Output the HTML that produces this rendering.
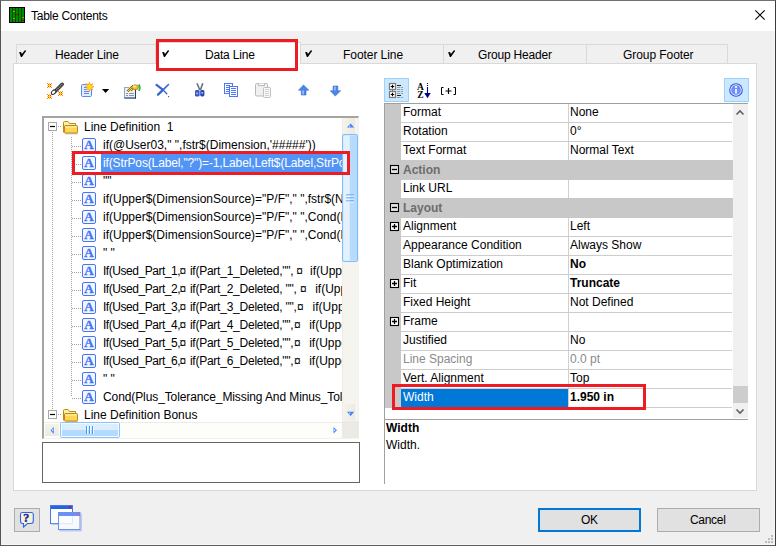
<!DOCTYPE html>
<html><head><meta charset="utf-8">
<style>
*{box-sizing:border-box}
html,body{margin:0;padding:0}
body{width:776px;height:546px;overflow:hidden;background:#f0f0f0;position:relative;font-family:"Liberation Sans",sans-serif;font-size:12px;color:#000}
.a{position:absolute}
.t{position:absolute;white-space:pre;line-height:14px;font-size:12px}
svg{position:absolute;overflow:visible}
</style></head><body>
<!-- window frame -->
<div class="a" style="left:0;top:0;width:776px;height:546px;border-style:solid;border-width:1px;border-color:#707070 #3c3c3c #5e5e5e #555"></div><div class="a" style="left:774px;top:31px;width:1px;height:514px;background:#f8f8f8"></div><div class="a" style="left:1px;top:544px;width:774px;height:1px;background:#f8f8f8"></div>
<div class="a" style="left:1px;top:1px;width:774px;height:30px;background:#fff"></div>
<!-- title icon -->
<svg style="left:9px;top:7px" width="16" height="16" viewBox="0 0 16 16">
<rect x="0" y="0" width="16" height="16" fill="#000"/>
<rect x="1" y="1" width="14" height="14" fill="#008a00"/>
<rect x="3" y="1" width="1" height="14" fill="#004a00"/>
<rect x="6" y="1" width="1" height="14" fill="#004a00"/>
<rect x="9" y="1" width="1" height="14" fill="#004a00"/>
<rect x="12" y="1" width="1" height="14" fill="#004a00"/>
<rect x="4" y="4" width="2" height="1" fill="#c89000"/>
<rect x="7" y="7" width="2" height="1" fill="#b00000"/>
<rect x="4" y="11" width="2" height="1" fill="#c89000"/>
<rect x="13" y="10" width="2" height="1" fill="#c89000"/>
<rect x="13" y="13" width="2" height="1" fill="#b00000"/>
</svg>
<div class="t" style="left:31px;top:9px;letter-spacing:-0.26px">Table Contents</div>
<svg style="left:755px;top:10px" width="10" height="10" viewBox="0 0 10 10"><path d="M0.3 0.3L9.7 9.7M9.7 0.3L0.3 9.7" stroke="#000" stroke-width="1.05"/></svg>

<!-- tabs -->
<div class="a" style="left:16px;top:44px;width:140px;height:20px;background:#f0f0f0;border:1px solid #d9d9d9;border-bottom:none"></div>
<div class="a" style="left:300px;top:44px;width:144px;height:20px;background:#f0f0f0;border:1px solid #d9d9d9;border-bottom:none"></div>
<div class="a" style="left:443px;top:44px;width:144px;height:20px;background:#f0f0f0;border:1px solid #d9d9d9;border-bottom:none"></div>
<div class="a" style="left:586px;top:44px;width:142px;height:20px;background:#f0f0f0;border:1px solid #d9d9d9;border-bottom:none"></div>
<!-- panel -->
<div class="a" style="left:13px;top:63px;width:744px;height:428px;background:#fff;border:1px solid #d9d9d9"></div>
<!-- selected tab -->
<div class="a" style="left:155px;top:42px;width:146px;height:22px;background:#fff;border:1px solid #d9d9d9;border-bottom:none"></div>
<div class="t" style="left:55px;top:48px;letter-spacing:-0.15px">Header Line</div>
<div class="t" style="left:205px;top:48px;letter-spacing:-0.19px">Data Line</div>
<div class="t" style="left:343px;top:48px;letter-spacing:-0.06px">Footer Line</div>
<div class="t" style="left:478px;top:48px;letter-spacing:-0.18px">Group Header</div>
<div class="t" style="left:623px;top:48px;letter-spacing:-0.07px">Group Footer</div>
<!-- checkmarks -->
<svg style="left:19px;top:50px" width="8" height="8" viewBox="0 0 8 8"><path d="M0.1 2.2L2.1 1.9L2.9 4.1L6.1 0L7.1 1.1L2.9 6.9L1.9 6.9Z" fill="#000"/></svg>
<svg style="left:162px;top:50px" width="8" height="8" viewBox="0 0 8 8"><path d="M0.1 2.2L2.1 1.9L2.9 4.1L6.1 0L7.1 1.1L2.9 6.9L1.9 6.9Z" fill="#000"/></svg>
<svg style="left:305px;top:50px" width="8" height="8" viewBox="0 0 8 8"><path d="M0.1 2.2L2.1 1.9L2.9 4.1L6.1 0L7.1 1.1L2.9 6.9L1.9 6.9Z" fill="#000"/></svg>
<svg style="left:448px;top:50px" width="8" height="8" viewBox="0 0 8 8"><path d="M0.1 2.2L2.1 1.9L2.9 4.1L6.1 0L7.1 1.1L2.9 6.9L1.9 6.9Z" fill="#000"/></svg>
<!-- red box around Data Line tab -->
<div class="a" style="left:156px;top:39px;width:142px;height:32px;border:3px solid #ed1c24"></div>

<svg style="left:0;top:0" width="776" height="546">
<g shape-rendering="crispEdges"><rect x="47" y="85" width="1" height="1" fill="#ffd800"/><rect x="48" y="85" width="1" height="1" fill="#ffd800"/><rect x="49" y="85" width="1" height="1" fill="#ffd800"/><rect x="50" y="85" width="1" height="1" fill="#ffd800"/><rect x="51" y="85" width="1" height="1" fill="#ffd800"/><rect x="49" y="83" width="1" height="1" fill="#ffd800"/><rect x="49" y="84" width="1" height="1" fill="#ffd800"/><rect x="49" y="86" width="1" height="1" fill="#ffd800"/><rect x="49" y="87" width="1" height="1" fill="#ffd800"/><rect x="47" y="83" width="1" height="1" fill="#ff6a80"/><rect x="51" y="83" width="1" height="1" fill="#ff6a80"/><rect x="47" y="87" width="1" height="1" fill="#ff6a80"/><rect x="51" y="87" width="1" height="1" fill="#ff6a80"/><rect x="48" y="84" width="1" height="1" fill="#ff4020"/><rect x="50" y="84" width="1" height="1" fill="#ff4020"/><rect x="48" y="86" width="1" height="1" fill="#ff4020"/><rect x="50" y="86" width="1" height="1" fill="#ff4020"/><rect x="47" y="96" width="1" height="1" fill="#ffd800"/><rect x="48" y="96" width="1" height="1" fill="#ffd800"/><rect x="49" y="96" width="1" height="1" fill="#ffd800"/><rect x="50" y="96" width="1" height="1" fill="#ffd800"/><rect x="51" y="96" width="1" height="1" fill="#ffd800"/><rect x="49" y="94" width="1" height="1" fill="#ffd800"/><rect x="49" y="95" width="1" height="1" fill="#ffd800"/><rect x="49" y="97" width="1" height="1" fill="#ffd800"/><rect x="49" y="98" width="1" height="1" fill="#ffd800"/><rect x="47" y="94" width="1" height="1" fill="#ff6a80"/><rect x="51" y="94" width="1" height="1" fill="#ff6a80"/><rect x="47" y="98" width="1" height="1" fill="#ff6a80"/><rect x="51" y="98" width="1" height="1" fill="#ff6a80"/><rect x="48" y="95" width="1" height="1" fill="#ff4020"/><rect x="50" y="95" width="1" height="1" fill="#ff4020"/><rect x="48" y="97" width="1" height="1" fill="#ff4020"/><rect x="50" y="97" width="1" height="1" fill="#ff4020"/><rect x="58" y="93" width="1" height="1" fill="#ffd800"/><rect x="59" y="93" width="1" height="1" fill="#ffd800"/><rect x="60" y="93" width="1" height="1" fill="#ffd800"/><rect x="61" y="93" width="1" height="1" fill="#ffd800"/><rect x="62" y="93" width="1" height="1" fill="#ffd800"/><rect x="60" y="91" width="1" height="1" fill="#ffd800"/><rect x="60" y="92" width="1" height="1" fill="#ffd800"/><rect x="60" y="94" width="1" height="1" fill="#ffd800"/><rect x="60" y="95" width="1" height="1" fill="#ffd800"/><rect x="58" y="91" width="1" height="1" fill="#ff6a80"/><rect x="62" y="91" width="1" height="1" fill="#ff6a80"/><rect x="58" y="95" width="1" height="1" fill="#ff6a80"/><rect x="62" y="95" width="1" height="1" fill="#ff6a80"/><rect x="59" y="92" width="1" height="1" fill="#ff4020"/><rect x="61" y="92" width="1" height="1" fill="#ff4020"/><rect x="59" y="94" width="1" height="1" fill="#ff4020"/><rect x="61" y="94" width="1" height="1" fill="#ff4020"/></g><path d="M62.2 84.3L55 91.5" stroke="#3a3a3a" stroke-width="3.6" stroke-linecap="round"/><path d="M62.2 84.3L55.5 91" stroke="#9a9a9a" stroke-width="1.6" stroke-dasharray="0.9 0.9"/><ellipse cx="53.6" cy="92.2" rx="2.6" ry="1.7" transform="rotate(-45 53.6 92.2)" fill="#fff" stroke="#333" stroke-width="1"/>
<rect x="81.5" y="84.5" width="10" height="12" rx="1.2" fill="#e4ecfc" stroke="#5b8bf2" stroke-width="1"/><path d="M84 87.5H86.5M84 89.5H86.5M84 91.5H89M84 93.5H89" stroke="#5b8bf2" stroke-width="1"/><path d="M89.50 82.20L90.30 84.86L92.75 83.55L91.44 86.00L94.10 86.80L91.44 87.60L92.75 90.05L90.30 88.74L89.50 91.40L88.70 88.74L86.25 90.05L87.56 87.60L84.90 86.80L87.56 86.00L86.25 83.55L88.70 84.86Z" fill="#ffff10" stroke="#ff7a20" stroke-width=".6"/><circle cx="89.5" cy="86.8" r="1.6" fill="#ffe000"/>
<path d="M102 89H109.2L105.6 93Z" fill="#000"/>
<rect x="124.5" y="87.5" width="11" height="10.5" fill="#eaf1fb" stroke="#90a8c8" stroke-width="1"/><path d="M124.5 98H136M135.5 88V98.5" stroke="#2a3a60" stroke-width="1"/><path d="M126 93.5H128M129 93.5H134M126 95.5H128M129 95.5H134" stroke="#8a94b0" stroke-width="1"/><g shape-rendering="crispEdges"><rect x="126" y="90" width="1" height="1" fill="#f4dc60"/><rect x="127" y="89" width="1" height="1" fill="#f4dc60"/><rect x="127" y="90" width="1" height="1" fill="#8a6a28"/><rect x="128" y="88" width="1" height="1" fill="#f4dc60"/><rect x="128" y="89" width="1" height="1" fill="#8a6a28"/><rect x="128" y="90" width="1" height="1" fill="#f4dc60"/><rect x="129" y="87" width="1" height="1" fill="#f4dc60"/><rect x="129" y="88" width="1" height="1" fill="#8a6a28"/><rect x="129" y="89" width="1" height="1" fill="#f4dc60"/><rect x="129" y="90" width="1" height="1" fill="#8a6a28"/><rect x="130" y="86" width="1" height="1" fill="#f4dc60"/><rect x="130" y="87" width="1" height="1" fill="#8a6a28"/><rect x="130" y="88" width="1" height="1" fill="#f4dc60"/><rect x="130" y="89" width="1" height="1" fill="#8a6a28"/><rect x="130" y="90" width="1" height="1" fill="#f4dc60"/><rect x="131" y="86" width="1" height="1" fill="#8a6a28"/><rect x="131" y="87" width="1" height="1" fill="#f4dc60"/><rect x="131" y="88" width="1" height="1" fill="#8a6a28"/><rect x="131" y="89" width="1" height="1" fill="#f4dc60"/><rect x="131" y="90" width="1" height="1" fill="#8a6a28"/><rect x="132" y="85" width="1" height="1" fill="#8a6a28"/><rect x="132" y="86" width="1" height="1" fill="#f4dc60"/><rect x="132" y="87" width="1" height="1" fill="#8a6a28"/><rect x="132" y="88" width="1" height="1" fill="#f4dc60"/><rect x="132" y="89" width="1" height="1" fill="#8a6a28"/><rect x="133" y="86" width="1" height="1" fill="#8a6a28"/><rect x="133" y="87" width="1" height="1" fill="#f4dc60"/><rect x="133" y="88" width="1" height="1" fill="#8a6a28"/><rect x="127" y="91" width="1" height="1" fill="#f4dc60"/><rect x="128" y="91" width="1" height="1" fill="#8a6a28"/><rect x="131" y="91" width="1" height="1" fill="#f4dc60"/><rect x="132" y="90" width="1" height="1" fill="#f4dc60"/></g><ellipse cx="135.2" cy="87.3" rx="3.3" ry="2.5" fill="#f2b828" stroke="#9a7010" stroke-width=".6"/><ellipse cx="134.6" cy="86.4" rx="2" ry="1" fill="#ffe890"/><path d="M138.8 84.5Q140.6 87.5 139 91" stroke="#40b040" stroke-width="1.8" fill="none"/>
<path d="M156.5 84.8L163 89.8" stroke="#3a64d0" stroke-width="2.2" stroke-linecap="round"/><path d="M163 89.8L167.2 94.2" stroke="#3a64d0" stroke-width="1.3"/><rect x="168" y="96" width="1.2" height="1.2" fill="#3a64d0"/><path d="M168.5 84.5L163 89.8" stroke="#3a64d0" stroke-width="1.6" stroke-linecap="round"/><path d="M163 89.8L158 94.6" stroke="#3a64d0" stroke-width="2.3" stroke-linecap="round"/>
<path d="M197 83.2L199.8 90M202.8 83.2L200.4 90" stroke="#6a7078" stroke-width="1.6"/><rect x="195" y="90" width="4.6" height="6.6" rx="1.4" fill="#3a5ac8"/><rect x="200.2" y="90" width="4.2" height="6.4" rx="1.4" fill="#2a48b0"/><rect x="196.3" y="92.6" width="1.6" height="1.6" fill="#a8c0ff"/><rect x="201.4" y="92" width="1.6" height="1.6" fill="#a8c0ff"/>
<g shape-rendering="crispEdges"><rect x="224.5" y="83.5" width="8" height="10" rx="1" fill="#fff" stroke="#4a78f8" stroke-width="1"/><path d="M226 85.5H230M226 87.5H230M226 89.5H230M226 91.5H230" stroke="#4a78f8" stroke-width="1"/><rect x="229.5" y="86.5" width="8" height="10" rx="1" fill="#fff" stroke="#4a78f8" stroke-width="1"/><path d="M231 88.5H236M231 90.5H236M231 92.5H236M231 94.5H236" stroke="#4a78f8" stroke-width="1"/></g>
<rect x="255.5" y="83.5" width="12" height="12.5" rx="1.2" fill="#f0f0f0" stroke="#b8b8b8" stroke-width="1"/><path d="M258.5 83.5V85.5H264.5V83.5" stroke="#b8b8b8" fill="#fff" stroke-width="1"/><rect x="263.5" y="87.5" width="7" height="10" rx=".8" fill="#f8f8f8" stroke="#c0c0c0" stroke-width="1"/><path d="M265 89.5H269M265 91.5H269M265 93.5H269M265 95.5H269" stroke="#d0d0d0" stroke-width="1"/>
<path d="M303.5 85L298.5 90.2H301.3V95H306V90.2H308.8Z" fill="#4a86e8" stroke="#3468c8" stroke-width=".6"/>
<rect x="302.4" y="90.5" width="1.4" height="4" fill="#a8c8ff"/>
<path d="M335.3 96L330.3 90.8H333.1V86H337.8V90.8H340.6Z" fill="#4a86e8" stroke="#3468c8" stroke-width=".6"/>
<rect x="334.2" y="86.5" width="1.4" height="4" fill="#a8c8ff"/>
</svg>

<div class="a" style="left:42px;top:116px;width:317px;height:323px;background:#fff;border-top:2px solid #a5a5a0;border-left:2px solid #a5a5a0;border-right:1px solid #f2f2ee;border-bottom:1px solid #f2f2ee"></div>
<div class="a" style="left:44px;top:118px;width:298px;height:304px;overflow:hidden">
<svg style="left:0;top:0" width="298" height="320">
<path d="M8.5 14V294" stroke="#a0a0a0" stroke-width="1" stroke-dasharray="1 1"/>
<path d="M27.5 19V279" stroke="#a0a0a0" stroke-width="1" stroke-dasharray="1 1"/>
<rect x="4.5" y="4.5" width="8" height="8" fill="#fff" stroke="#a8a8a8"/>
<path d="M6 8.5H11" stroke="#000" stroke-width="1.2"/>
<path d="M14 8.5H18" stroke="#a0a0a0" stroke-dasharray="1 1"/>
<g transform="translate(18,2)"><path d="M1.5 12.5V2.5Q1.5 1.5 2.5 1.5H6L7.5 3.5H13.5V5.5" fill="#fff0a8" stroke="#c08a10" stroke-width="1"/><rect x="2.5" y="5.5" width="13" height="7.5" rx=".8" fill="#ffd457" stroke="#c08a10" stroke-width="1"/><path d="M3.5 7H14.5" stroke="#fff6c0" stroke-width="1"/><path d="M3 13.8H16" stroke="#8a6a30" stroke-width=".8" opacity=".5"/></g>
<path d="M28 28.5H38" stroke="#a0a0a0" stroke-dasharray="1 1"/>
<g transform="translate(38,20)"><rect x=".5" y=".5" width="13" height="13" rx="1.5" fill="#f2f6ff" stroke="#4574f5" stroke-width="1"/><text x="7" y="11.4" text-anchor="middle" font-family="Liberation Serif" font-weight="bold" font-size="13" fill="#4574f5" stroke="#4574f5" stroke-width=".35">A</text></g>
<path d="M28 46.5H38" stroke="#a0a0a0" stroke-dasharray="1 1"/>
<g transform="translate(38,38)"><rect x=".5" y=".5" width="13" height="13" rx="1.5" fill="#f2f6ff" stroke="#4574f5" stroke-width="1"/><text x="7" y="11.4" text-anchor="middle" font-family="Liberation Serif" font-weight="bold" font-size="13" fill="#4574f5" stroke="#4574f5" stroke-width=".35">A</text></g>
<path d="M28 64.5H38" stroke="#a0a0a0" stroke-dasharray="1 1"/>
<g transform="translate(38,56)"><rect x=".5" y=".5" width="13" height="13" rx="1.5" fill="#f2f6ff" stroke="#4574f5" stroke-width="1"/><text x="7" y="11.4" text-anchor="middle" font-family="Liberation Serif" font-weight="bold" font-size="13" fill="#4574f5" stroke="#4574f5" stroke-width=".35">A</text></g>
<path d="M28 82.5H38" stroke="#a0a0a0" stroke-dasharray="1 1"/>
<g transform="translate(38,74)"><rect x=".5" y=".5" width="13" height="13" rx="1.5" fill="#f2f6ff" stroke="#4574f5" stroke-width="1"/><text x="7" y="11.4" text-anchor="middle" font-family="Liberation Serif" font-weight="bold" font-size="13" fill="#4574f5" stroke="#4574f5" stroke-width=".35">A</text></g>
<path d="M28 100.5H38" stroke="#a0a0a0" stroke-dasharray="1 1"/>
<g transform="translate(38,92)"><rect x=".5" y=".5" width="13" height="13" rx="1.5" fill="#f2f6ff" stroke="#4574f5" stroke-width="1"/><text x="7" y="11.4" text-anchor="middle" font-family="Liberation Serif" font-weight="bold" font-size="13" fill="#4574f5" stroke="#4574f5" stroke-width=".35">A</text></g>
<path d="M28 118.5H38" stroke="#a0a0a0" stroke-dasharray="1 1"/>
<g transform="translate(38,110)"><rect x=".5" y=".5" width="13" height="13" rx="1.5" fill="#f2f6ff" stroke="#4574f5" stroke-width="1"/><text x="7" y="11.4" text-anchor="middle" font-family="Liberation Serif" font-weight="bold" font-size="13" fill="#4574f5" stroke="#4574f5" stroke-width=".35">A</text></g>
<path d="M28 136.5H38" stroke="#a0a0a0" stroke-dasharray="1 1"/>
<g transform="translate(38,128)"><rect x=".5" y=".5" width="13" height="13" rx="1.5" fill="#f2f6ff" stroke="#4574f5" stroke-width="1"/><text x="7" y="11.4" text-anchor="middle" font-family="Liberation Serif" font-weight="bold" font-size="13" fill="#4574f5" stroke="#4574f5" stroke-width=".35">A</text></g>
<path d="M28 154.5H38" stroke="#a0a0a0" stroke-dasharray="1 1"/>
<g transform="translate(38,146)"><rect x=".5" y=".5" width="13" height="13" rx="1.5" fill="#f2f6ff" stroke="#4574f5" stroke-width="1"/><text x="7" y="11.4" text-anchor="middle" font-family="Liberation Serif" font-weight="bold" font-size="13" fill="#4574f5" stroke="#4574f5" stroke-width=".35">A</text></g>
<path d="M28 172.5H38" stroke="#a0a0a0" stroke-dasharray="1 1"/>
<g transform="translate(38,164)"><rect x=".5" y=".5" width="13" height="13" rx="1.5" fill="#f2f6ff" stroke="#4574f5" stroke-width="1"/><text x="7" y="11.4" text-anchor="middle" font-family="Liberation Serif" font-weight="bold" font-size="13" fill="#4574f5" stroke="#4574f5" stroke-width=".35">A</text></g>
<path d="M28 190.5H38" stroke="#a0a0a0" stroke-dasharray="1 1"/>
<g transform="translate(38,182)"><rect x=".5" y=".5" width="13" height="13" rx="1.5" fill="#f2f6ff" stroke="#4574f5" stroke-width="1"/><text x="7" y="11.4" text-anchor="middle" font-family="Liberation Serif" font-weight="bold" font-size="13" fill="#4574f5" stroke="#4574f5" stroke-width=".35">A</text></g>
<path d="M28 208.5H38" stroke="#a0a0a0" stroke-dasharray="1 1"/>
<g transform="translate(38,200)"><rect x=".5" y=".5" width="13" height="13" rx="1.5" fill="#f2f6ff" stroke="#4574f5" stroke-width="1"/><text x="7" y="11.4" text-anchor="middle" font-family="Liberation Serif" font-weight="bold" font-size="13" fill="#4574f5" stroke="#4574f5" stroke-width=".35">A</text></g>
<path d="M28 226.5H38" stroke="#a0a0a0" stroke-dasharray="1 1"/>
<g transform="translate(38,218)"><rect x=".5" y=".5" width="13" height="13" rx="1.5" fill="#f2f6ff" stroke="#4574f5" stroke-width="1"/><text x="7" y="11.4" text-anchor="middle" font-family="Liberation Serif" font-weight="bold" font-size="13" fill="#4574f5" stroke="#4574f5" stroke-width=".35">A</text></g>
<path d="M28 244.5H38" stroke="#a0a0a0" stroke-dasharray="1 1"/>
<g transform="translate(38,236)"><rect x=".5" y=".5" width="13" height="13" rx="1.5" fill="#f2f6ff" stroke="#4574f5" stroke-width="1"/><text x="7" y="11.4" text-anchor="middle" font-family="Liberation Serif" font-weight="bold" font-size="13" fill="#4574f5" stroke="#4574f5" stroke-width=".35">A</text></g>
<path d="M28 262.5H38" stroke="#a0a0a0" stroke-dasharray="1 1"/>
<g transform="translate(38,254)"><rect x=".5" y=".5" width="13" height="13" rx="1.5" fill="#f2f6ff" stroke="#4574f5" stroke-width="1"/><text x="7" y="11.4" text-anchor="middle" font-family="Liberation Serif" font-weight="bold" font-size="13" fill="#4574f5" stroke="#4574f5" stroke-width=".35">A</text></g>
<path d="M28 280.5H38" stroke="#a0a0a0" stroke-dasharray="1 1"/>
<g transform="translate(38,272)"><rect x=".5" y=".5" width="13" height="13" rx="1.5" fill="#f2f6ff" stroke="#4574f5" stroke-width="1"/><text x="7" y="11.4" text-anchor="middle" font-family="Liberation Serif" font-weight="bold" font-size="13" fill="#4574f5" stroke="#4574f5" stroke-width=".35">A</text></g>
<rect x="4.5" y="292.5" width="8" height="8" fill="#fff" stroke="#a8a8a8"/>
<path d="M6 296.5H11" stroke="#000" stroke-width="1.2"/>
<path d="M14 296.5H18" stroke="#a0a0a0" stroke-dasharray="1 1"/>
<g transform="translate(18,290)"><path d="M1.5 12.5V2.5Q1.5 1.5 2.5 1.5H6L7.5 3.5H13.5V5.5" fill="#fff0a8" stroke="#c08a10" stroke-width="1"/><rect x="2.5" y="5.5" width="13" height="7.5" rx=".8" fill="#ffd457" stroke="#c08a10" stroke-width="1"/><path d="M3.5 7H14.5" stroke="#fff6c0" stroke-width="1"/><path d="M3 13.8H16" stroke="#8a6a30" stroke-width=".8" opacity=".5"/></g>
</svg>
<div class="t" style="left:40px;top:2px">Line Definition  1</div>
<div class="t" style="left:59px;top:20px">if(@User03,&quot; &quot;,fstr$(Dimension,&#x27;#####&#x27;))</div>
<div class="a" style="left:57px;top:36px;width:260px;height:18px;background:#5294f5"></div>
<div class="t" style="left:59px;top:38px;color:#fff;letter-spacing:-0.14px">if(StrPos(Label,&quot;?&quot;)=-1,Label,Left$(Label,StrPos(Label,&quot;?&quot;)-1))</div>
<div class="t" style="left:59px;top:56px">&quot;&quot;</div>
<div class="t" style="left:59px;top:74px">if(Upper$(DimensionSource)=&quot;P/F&quot;,&quot; &quot;,fstr$(N</div>
<div class="t" style="left:59px;top:92px">if(Upper$(DimensionSource)=&quot;P/F&quot;,&quot; &quot;,Cond(Pl</div>
<div class="t" style="left:59px;top:110px">if(Upper$(DimensionSource)=&quot;P/F&quot;,&quot; &quot;,Cond(Pl</div>
<div class="t" style="left:59px;top:128px">&quot; &quot;</div>
<div class="t" style="left:59px;top:146px;letter-spacing:-0.46px">If(Used_Part_1,</div><div class="t" style="left:135.4px;top:146px">¤</div><div class="t" style="left:145.9px;top:146px;letter-spacing:-0.24px">if(Part_1_Deleted,&quot;&quot;,</div><div class="t" style="left:252.3px;top:146px">¤</div><div class="t" style="left:266.0px;top:146px">if(Upper$</div>
<div class="t" style="left:59px;top:164px;letter-spacing:-0.46px">If(Used_Part_2,</div><div class="t" style="left:135.4px;top:164px">¤</div><div class="t" style="left:145.9px;top:164px;letter-spacing:-0.24px">if(Part_2_Deleted, &quot;&quot;,</div><div class="t" style="left:255.9px;top:164px">¤</div><div class="t" style="left:271.2px;top:164px">if(Upper$</div>
<div class="t" style="left:59px;top:182px;letter-spacing:-0.46px">If(Used_Part_3,</div><div class="t" style="left:135.4px;top:182px">¤</div><div class="t" style="left:145.9px;top:182px;letter-spacing:-0.24px">if(Part_3_Deleted, &quot;&quot;,</div><div class="t" style="left:253.0px;top:182px">¤</div><div class="t" style="left:268.6px;top:182px">if(Upper$</div>
<div class="t" style="left:59px;top:200px;letter-spacing:-0.46px">If(Used_Part_4,</div><div class="t" style="left:135.4px;top:200px">¤</div><div class="t" style="left:145.9px;top:200px;letter-spacing:-0.24px">if(Part_4_Deleted,&quot;&quot;,</div><div class="t" style="left:249.9px;top:200px">¤</div><div class="t" style="left:265.2px;top:200px">if(Upper$</div>
<div class="t" style="left:59px;top:218px;letter-spacing:-0.46px">If(Used_Part_5,</div><div class="t" style="left:135.4px;top:218px">¤</div><div class="t" style="left:145.9px;top:218px;letter-spacing:-0.24px">if(Part_5_Deleted,&quot;&quot;,</div><div class="t" style="left:249.9px;top:218px">¤</div><div class="t" style="left:265.2px;top:218px">if(Upper$</div>
<div class="t" style="left:59px;top:236px;letter-spacing:-0.46px">If(Used_Part_6,</div><div class="t" style="left:135.4px;top:236px">¤</div><div class="t" style="left:145.9px;top:236px;letter-spacing:-0.24px">if(Part_6_Deleted,&quot;&quot;,</div><div class="t" style="left:249.9px;top:236px">¤</div><div class="t" style="left:265.2px;top:236px">if(Upper$</div>
<div class="t" style="left:59px;top:254px">&quot; &quot;</div>
<div class="t" style="left:59px;top:272px;letter-spacing:-0.1px">Cond(Plus_Tolerance_Missing And Minus_Tolerance</div>
<div class="t" style="left:40px;top:290px">Line Definition Bonus</div>
</div>
<div class="a" style="left:342px;top:118px;width:16px;height:304px;background:#f5f4ef;border-left:1px solid #eeede5"></div>
<div class="a" style="left:344px;top:118px;width:11px;height:16px;background:linear-gradient(90deg,#f3f2ec,#eceae2)"></div>
<div class="a" style="left:344px;top:404px;width:11px;height:16px;background:linear-gradient(90deg,#f3f2ec,#eceae2)"></div>
<svg style="left:0;top:0" width="776" height="546"><path d="M347 127.6H354.2L350.6 123.4Z" fill="#3d82f8"/><rect x="349.2" y="125.6" width="1.1" height="1.1" fill="#fff"/><path d="M347 411.8H354.2L350.6 416Z" fill="#3d82f8"/><rect x="349.2" y="412.6" width="1.1" height="1.1" fill="#fff"/><rect x="342.5" y="134.5" width="15" height="127" rx="1.5" fill="#cfe6fd" stroke="#7cbcff" stroke-width="1"/><rect x="343.5" y="135.5" width="6" height="125" fill="#e4f1fe"/><rect x="350" y="135.5" width="7" height="125" fill="#b8dbfb"/><path d="M346 195H354M346 198H354M346 201H354" stroke="#3c96ff" stroke-width="1"/><path d="M346 196H354M346 199H354M346 202H354" stroke="#fff" stroke-width=".8"/></svg>
<div class="a" style="left:44px;top:422px;width:298px;height:16px;background:#fdfdf9;border-top:1px solid #eeede5"></div>
<div class="a" style="left:342px;top:421px;width:17px;height:17px;background:#ebeae4"></div>
<div class="a" style="left:45px;top:424px;width:14px;height:12px;background:linear-gradient(180deg,#f3f2ec,#eceae2)"></div>
<svg style="left:0;top:0" width="776" height="546"><path d="M53.8 427L50.5 430.5L53.8 434Z" fill="#4a88f8"/><rect x="52" y="429.6" width="1.2" height="1.2" fill="#fff"/><path d="M333.5 427L337 430.3L333.5 433.6Z" fill="#4a88f8"/><rect x="334" y="429.6" width="1.2" height="1.2" fill="#fff"/><rect x="60.5" y="422.5" width="59" height="15" rx="1.5" fill="#d2e8fd" stroke="#88c4ff" stroke-width="1"/><rect x="61.5" y="423.5" width="57" height="13" fill="none" stroke="#f4faff" stroke-width="1"/><rect x="62" y="424" width="56" height="6" fill="#dcedfe"/><rect x="62" y="430" width="56" height="6" fill="#b6dafc"/><path d="M86.5 426V434M89.5 426V434M92.5 426V434" stroke="#3c9cff" stroke-width="1"/><path d="M87.5 426V434M90.5 426V434M93.5 426V434" stroke="#fff" stroke-width=".8"/></svg>
<div class="a" style="left:42px;top:442px;width:318px;height:41px;background:#fff;border:1px solid #646464"></div>
<div class="a" style="left:72px;top:151px;width:278px;height:24px;border:3px solid #ed1c24"></div>

<div class="a" style="left:384px;top:78px;width:25px;height:24px;background:#cce8ff;border:1px solid #99d1ff"></div>
<div class="a" style="left:724px;top:78px;width:25px;height:24px;background:#cce8ff;border:1px solid #99d1ff"></div>
<svg style="left:0;top:0" width="776" height="546">
<rect x="389.5" y="83.5" width="6" height="6" fill="#fff" stroke="#7a7a7a" stroke-width="1.2"/><rect x="389.5" y="91.5" width="6" height="6" fill="#fff" stroke="#7a7a7a" stroke-width="1.2"/><path d="M390.8 86.5H394.2M392.5 84.8V88.2M390.8 94.5H394.2M392.5 92.8V96.2" stroke="#000" stroke-width="1.2"/><path d="M392.5 89.8V91.2" stroke="#7a7a7a" stroke-width="1"/><path d="M397 85.5H401M397 95.5H401" stroke="#222" stroke-width="1"/><path d="M397 87.5H400.3M397 89.5H400.3M397 91.5H400.3M397 93.5H400.3M397 97.5H400.3M401.2 87.5H403M401.2 89.5H403M401.2 91.5H403M401.2 93.5H403M401.2 97.5H403" stroke="#9a9a9a" stroke-width="1"/><text x="420.5" y="89.8" text-anchor="middle" font-family="Liberation Serif" font-size="9.5" font-weight="bold" fill="#000">A</text><text x="420.5" y="97.8" text-anchor="middle" font-family="Liberation Serif" font-size="9.5" font-weight="bold" fill="#000">Z</text><path d="M427.5 83V84M427.5 85V86M427.5 87V93.5" stroke="#000080" stroke-width="1.1"/><path d="M424.3 93H430.7L427.5 98.2Z" fill="#000080"/><path d="M443.5 87.5H441.5V94.5H443.5M453.5 87.5H455.5V94.5H453.5" stroke="#000" stroke-width="1" fill="none"/>
<path d="M445.5 91H451.5M448.5 88V94" stroke="#000" stroke-width="1.2"/>
<circle cx="736" cy="90" r="6.8" fill="#2850f0"/><circle cx="736" cy="90" r="5.7" fill="#fff"/><circle cx="736" cy="90" r="4.9" fill="#6f92f2"/><rect x="735" y="86" width="2" height="2" fill="#e6ecff"/><rect x="735" y="89" width="2" height="4.5" fill="#e6ecff"/></svg>
<div class="a" style="left:384px;top:103px;width:364px;height:317px;background:#fff;border-top:1px solid #a0a0a0;border-left:1px solid #a0a0a0;border-bottom:1px solid #a0a0a0"></div>
<div class="a" style="left:385px;top:104px;width:16px;height:304px;background:#c8c8c8"></div>
<div class="a" style="left:401px;top:122px;width:331px;height:1px;background:#cdcdcd"></div>
<div class="a" style="left:568px;top:104px;width:1px;height:18px;background:#d0d0d0"></div>
<div class="t" style="left:403px;top:105px;color:#000">Format</div>
<div class="t" style="left:570px;top:105px;">None</div>
<div class="a" style="left:401px;top:141px;width:331px;height:1px;background:#cdcdcd"></div>
<div class="a" style="left:568px;top:123px;width:1px;height:18px;background:#d0d0d0"></div>
<div class="t" style="left:403px;top:124px;color:#000">Rotation</div>
<div class="t" style="left:570px;top:124px;">0°</div>
<div class="a" style="left:401px;top:160px;width:331px;height:1px;background:#cdcdcd"></div>
<div class="a" style="left:568px;top:142px;width:1px;height:18px;background:#d0d0d0"></div>
<div class="t" style="left:403px;top:143px;color:#000">Text Format</div>
<div class="t" style="left:570px;top:143px;">Normal Text</div>
<div class="a" style="left:401px;top:160px;width:332px;height:20px;background:#c8c8c8"></div>
<div class="t" style="left:403px;top:163px;font-weight:bold;color:#6d6d6d">Action</div>
<svg style="left:390px;top:165px" width="9" height="9"><rect x=".5" y=".5" width="8" height="8" fill="#e4e4e4" stroke="#000" stroke-width="1.1"/><path d="M2 4.5H7" stroke="#000" stroke-width="1.3"/></svg>
<div class="a" style="left:401px;top:198px;width:331px;height:1px;background:#cdcdcd"></div>
<div class="a" style="left:568px;top:180px;width:1px;height:18px;background:#d0d0d0"></div>
<div class="t" style="left:403px;top:181px;color:#000">Link URL</div>
<div class="t" style="left:570px;top:181px;"></div>
<div class="a" style="left:401px;top:198px;width:332px;height:20px;background:#c8c8c8"></div>
<div class="t" style="left:403px;top:201px;font-weight:bold;color:#6d6d6d">Layout</div>
<svg style="left:390px;top:203px" width="9" height="9"><rect x=".5" y=".5" width="8" height="8" fill="#e4e4e4" stroke="#000" stroke-width="1.1"/><path d="M2 4.5H7" stroke="#000" stroke-width="1.3"/></svg>
<div class="a" style="left:401px;top:236px;width:331px;height:1px;background:#cdcdcd"></div>
<div class="a" style="left:568px;top:218px;width:1px;height:18px;background:#d0d0d0"></div>
<svg style="left:390px;top:222px" width="9" height="9"><rect x=".5" y=".5" width="8" height="8" fill="#fff" stroke="#000" stroke-width="1.1"/><path d="M2 4.5H7M4.5 2V7" stroke="#000" stroke-width="1.3"/></svg>
<div class="t" style="left:403px;top:219px;color:#000">Alignment</div>
<div class="t" style="left:570px;top:219px;">Left</div>
<div class="a" style="left:401px;top:255px;width:331px;height:1px;background:#cdcdcd"></div>
<div class="a" style="left:568px;top:237px;width:1px;height:18px;background:#d0d0d0"></div>
<div class="t" style="left:403px;top:238px;color:#000">Appearance Condition</div>
<div class="t" style="left:570px;top:238px;">Always Show</div>
<div class="a" style="left:401px;top:274px;width:331px;height:1px;background:#cdcdcd"></div>
<div class="a" style="left:568px;top:256px;width:1px;height:18px;background:#d0d0d0"></div>
<div class="t" style="left:403px;top:257px;color:#000">Blank Optimization</div>
<div class="t" style="left:570px;top:257px;font-weight:bold;">No</div>
<div class="a" style="left:401px;top:293px;width:331px;height:1px;background:#cdcdcd"></div>
<div class="a" style="left:568px;top:275px;width:1px;height:18px;background:#d0d0d0"></div>
<svg style="left:390px;top:279px" width="9" height="9"><rect x=".5" y=".5" width="8" height="8" fill="#fff" stroke="#000" stroke-width="1.1"/><path d="M2 4.5H7M4.5 2V7" stroke="#000" stroke-width="1.3"/></svg>
<div class="t" style="left:403px;top:276px;color:#000">Fit</div>
<div class="t" style="left:570px;top:276px;font-weight:bold;">Truncate</div>
<div class="a" style="left:401px;top:312px;width:331px;height:1px;background:#cdcdcd"></div>
<div class="a" style="left:568px;top:294px;width:1px;height:18px;background:#d0d0d0"></div>
<div class="t" style="left:403px;top:295px;color:#000">Fixed Height</div>
<div class="t" style="left:570px;top:295px;">Not Defined</div>
<div class="a" style="left:401px;top:331px;width:331px;height:1px;background:#cdcdcd"></div>
<div class="a" style="left:568px;top:313px;width:1px;height:18px;background:#d0d0d0"></div>
<svg style="left:390px;top:317px" width="9" height="9"><rect x=".5" y=".5" width="8" height="8" fill="#fff" stroke="#000" stroke-width="1.1"/><path d="M2 4.5H7M4.5 2V7" stroke="#000" stroke-width="1.3"/></svg>
<div class="t" style="left:403px;top:314px;color:#000">Frame</div>
<div class="t" style="left:570px;top:314px;"></div>
<div class="a" style="left:401px;top:350px;width:331px;height:1px;background:#cdcdcd"></div>
<div class="a" style="left:568px;top:332px;width:1px;height:18px;background:#d0d0d0"></div>
<div class="t" style="left:403px;top:333px;color:#000">Justified</div>
<div class="t" style="left:570px;top:333px;">No</div>
<div class="a" style="left:401px;top:369px;width:331px;height:1px;background:#cdcdcd"></div>
<div class="a" style="left:568px;top:351px;width:1px;height:18px;background:#d0d0d0"></div>
<div class="t" style="left:403px;top:352px;color:#8a8a8a">Line Spacing</div>
<div class="t" style="left:570px;top:352px;color:#8a8a8a;">0.0 pt</div>
<div class="a" style="left:401px;top:388px;width:331px;height:1px;background:#cdcdcd"></div>
<div class="a" style="left:568px;top:370px;width:1px;height:18px;background:#d0d0d0"></div>
<div class="t" style="left:403px;top:371px;color:#000">Vert. Alignment</div>
<div class="t" style="left:570px;top:371px;">Top</div>
<div class="a" style="left:401px;top:407px;width:331px;height:1px;background:#cdcdcd"></div>
<div class="a" style="left:568px;top:389px;width:1px;height:18px;background:#d0d0d0"></div>
<div class="a" style="left:401px;top:389px;width:167px;height:18px;background:#0078d7"></div>
<div class="t" style="left:403px;top:390px;color:#fff">Width</div>
<div class="t" style="left:570px;top:390px;font-weight:bold;">1.950 in</div>
<div class="a" style="left:385px;top:408px;width:348px;height:11px;background:#fff"></div>
<div class="a" style="left:733px;top:104px;width:15px;height:314px;background:#f0f0f0"></div>
<div class="a" style="left:733px;top:386px;width:15px;height:17px;background:#cdcdcd"></div>
<svg style="left:0;top:0" width="776" height="546"><path d="M736.5 114.5L740 111L743.5 114.5" stroke="#606060" stroke-width="1.6" fill="none"/><path d="M736.5 409.5L740 413L743.5 409.5" stroke="#606060" stroke-width="1.6" fill="none"/></svg>
<div class="a" style="left:384px;top:420px;width:1px;height:64px;background:#a0a0a0"></div>
<div class="t" style="left:386px;top:421px;font-weight:bold">Width</div>
<div class="t" style="left:386px;top:438px">Width.</div>
<div class="a" style="left:392px;top:384px;width:254px;height:26px;border:3px solid #ed1c24"></div>

<!-- BOTTOM -->
<div class="a" style="left:14px;top:508px;width:26px;height:24px;background:#e1e1e1;border:1px solid #adadad"></div>
<div class="a" style="left:538px;top:508px;width:103px;height:24px;background:#e1e1e1;border:2px solid #0078d7"></div>
<div class="t" style="left:581px;top:513px;letter-spacing:-0.4px">OK</div>
<div class="a" style="left:657px;top:508px;width:103px;height:24px;background:#e1e1e1;border:1px solid #adadad"></div>
<div class="t" style="left:690px;top:513px;letter-spacing:-0.3px">Cancel</div>
<svg style="left:0;top:0" width="776" height="546">
<path d="M22 512.5Q20.5 512.5 20.5 514.5V521Q20.5 523.5 22.5 523.5H23.5V527L27.5 523.5H31Q33.3 523.5 33.3 521V514.5Q33.3 512.5 31.5 512.5Z" fill="#f6f3d4" stroke="#2f62f2" stroke-width="1.1"/>
<text x="26.3" y="522.3" text-anchor="middle" font-family="Liberation Serif" font-size="12" font-weight="bold" fill="#28289a" stroke="#28289a" stroke-width=".45">?</text>
<rect x="50.5" y="505.5" width="22" height="18" fill="#fff" stroke="#4a78ec" stroke-width="1"/>
<rect x="51" y="506" width="21" height="3" fill="#2462e6"/>
<rect x="69" y="506" width="2" height="2" fill="#e01010"/>
<rect x="51.5" y="523.5" width="22" height="1.5" fill="#9cb4f0" opacity=".6"/>
<rect x="58.5" y="512.5" width="21.5" height="17" fill="#fafbff" fill-opacity=".85" stroke="#6c90f0" stroke-width="1"/>
<rect x="59" y="513" width="21" height="3" fill="#5a86ee" opacity=".9"/>
<rect x="77" y="513" width="2" height="2" fill="#e86080"/>
<rect x="59.5" y="530" width="22" height="1.5" fill="#9cb4f0" opacity=".6"/>
<rect x="80.5" y="513.5" width="1.5" height="17" fill="#9cb4f0" opacity=".6"/>
<rect x="771" y="535" width="2" height="2" fill="#bcbcbc"/>
<rect x="768" y="538" width="2" height="2" fill="#bcbcbc"/>
<rect x="771" y="538" width="2" height="2" fill="#bcbcbc"/>
<rect x="765" y="541" width="2" height="2" fill="#bcbcbc"/>
<rect x="768" y="541" width="2" height="2" fill="#bcbcbc"/>
<rect x="771" y="541" width="2" height="2" fill="#bcbcbc"/>
</svg>
</body></html>
